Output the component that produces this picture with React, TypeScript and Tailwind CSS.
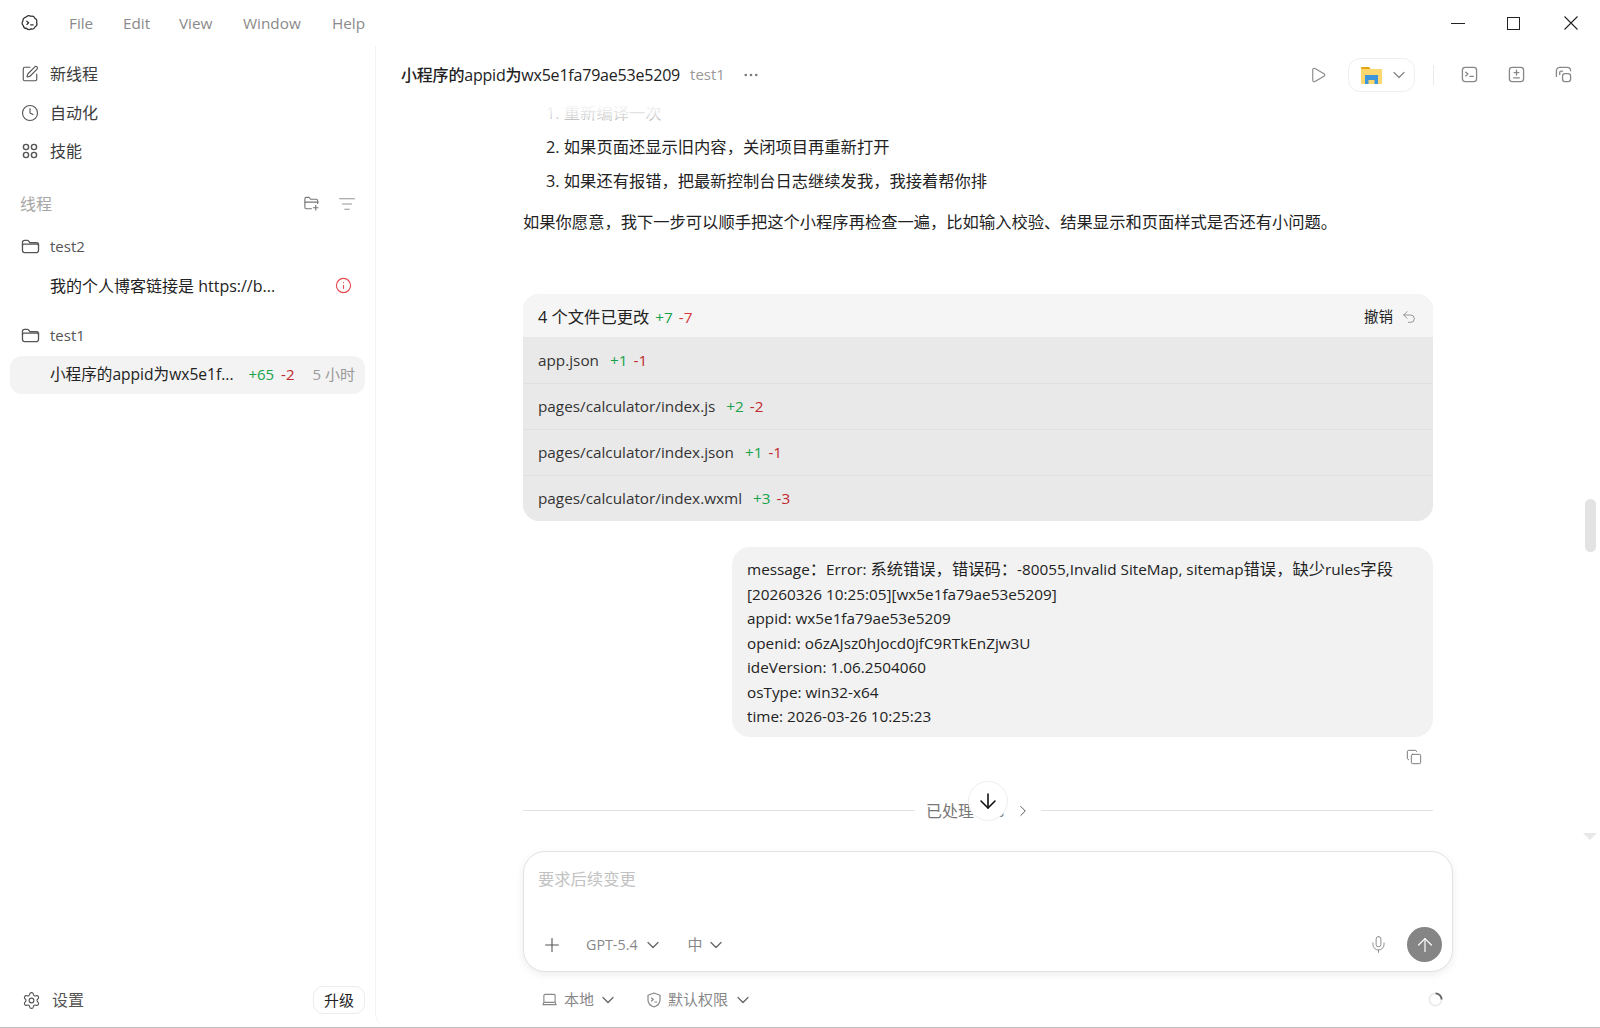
import {
  ArrowDown,
  ArrowUp,
  ChevronDown,
  ChevronRight,
  Clock,
  Copy,
  Ellipsis,
  Info,
  ListFilter,
  Mic,
  Play,
  Plus,
  Settings,
  SquarePen,
  Undo2,
} from "lucide-react";

const FONT = "font-['Open_Sans','Noto_Sans_CJK_SC',sans-serif]";

const menus = [
  { label: "File", w: "w-[54px]" },
  { label: "Edit", w: "w-[56px]" },
  { label: "View", w: "w-[64px]" },
  { label: "Window", w: "w-[89px]" },
  { label: "Help", w: "w-[40px]" },
];

const files = [
  { name: "app.json", add: "+1", del: "-1" },
  { name: "pages/calculator/index.js", add: "+2", del: "-2" },
  { name: "pages/calculator/index.json", add: "+1", del: "-1" },
  { name: "pages/calculator/index.wxml", add: "+3", del: "-3" },
];

const errorLines = [
  "[20260326 10:25:05][wx5e1fa79ae53e5209]",
  "appid: wx5e1fa79ae53e5209",
  "openid: o6zAJsz0hJocd0jfC9RTkEnZjw3U",
  "ideVersion: 1.06.2504060",
  "osType: win32-x64",
  "time: 2026-03-26 10:25:23",
];

function Logo() {
  return (
    <svg viewBox="0 0 20 20" className="h-[18px] w-[18px]" fill="none" stroke="#333" strokeWidth="1.4" strokeLinecap="round" strokeLinejoin="round">
      <path d="M6 3.2c1.6-1.6 3.4-1.7 4.8-.6 2-.7 4 .2 4.6 2.2 1.9.8 2.7 2.8 1.9 4.6.9 1.9.2 3.8-1.6 4.7-.5 2-2.5 3.100-4.500 2.400-1.500 1.200-3.500 1-4.800-.4-2 .1-3.600-1.200-3.800-3.200C1 11.600.8 9.500 2.100 8 1.900 5.800 3.700 3.900 6 3.200Z" />
      <path d="m6.500 8 2 1.800-2 1.800M10.800 12h2.700" />
    </svg>
  );
}

function SkillsIcon() {
  return (
    <svg viewBox="0 0 18 18" className="h-[18px] w-[18px]" fill="none" stroke="#555" strokeWidth="1.4">
      <circle cx="5" cy="5" r="2.600" />
      <circle cx="13" cy="5" r="2.600" />
      <circle cx="5" cy="13" r="2.600" />
      <circle cx="13" cy="13" r="2.600" />
    </svg>
  );
}

function ProjectFolderIcon() {
  return (
    <svg viewBox="0 0 20 18" className="h-[17px] w-[19px]" fill="none" stroke="#555" strokeWidth="1.400" strokeLinecap="round" strokeLinejoin="round">
      <path d="M4 15.500h12a2.500 2.500 0 0 0 2.500-2.500V7a2 2 0 0 0-2-2H9.500L7.600 2.800a1 1 0 0 0-.8-.3H3.500a2 2 0 0 0-2 2V13A2.500 2.500 0 0 0 4 15.500Z" />
      <path d="M1.500 8a1.500 1.500 0 0 1 1.500-1.500h14a1.500 1.500 0 0 1 1.500 1.500" />
    </svg>
  );
}

function FolderPlusIcon() {
  return (
    <svg viewBox="0 0 18 18" className="h-[17px] w-[17px]" fill="none" stroke="#777" strokeWidth="1.200" strokeLinecap="round" strokeLinejoin="round">
      <path d="M9 14.500H3.500A1.500 1.500 0 0 1 2 13V4a1.500 1.500 0 0 1 1.500-1.500h2.800l1.700 2h6a1.500 1.500 0 0 1 1.500 1.500v3" />
      <path d="M2 7.500h14M13.500 11v5M11 13.500h5" />
    </svg>
  );
}

function ExplorerIcon() {
  return (
    <svg viewBox="0 0 22 18" className="h-[18px] w-[22px]">
      <path d="M0 2a1 1 0 0 1 1-1h7l2 2.500H0Z" fill="#e2a711" />
      <rect x="0" y="3" width="21" height="15" rx="1" fill="#fcd770" />
      <path d="M4 9h13v9h-3.500v-4h-6v4H4Z" fill="#3d96dc" />
    </svg>
  );
}

function TerminalIcon() {
  return (
    <svg viewBox="0 0 18 18" className="h-[17px] w-[17px]" fill="none" stroke="#888" strokeWidth="1.400" strokeLinecap="round" strokeLinejoin="round">
      <rect x="1.500" y="1.500" width="15" height="15" rx="3" />
      <path d="m5 6.500 2.300 2-2.300 2M9.500 11h3.500" />
    </svg>
  );
}

function DiffIcon() {
  return (
    <svg viewBox="0 0 18 18" className="h-[17px] w-[17px]" fill="none" stroke="#888" strokeWidth="1.400" strokeLinecap="round" strokeLinejoin="round">
      <rect x="1.500" y="1.500" width="15" height="15" rx="3" />
      <path d="M9 4.500v5M6.500 7h5M6 12.500h6" />
    </svg>
  );
}

function PanelIcon() {
  return (
    <svg viewBox="0 0 18 18" className="h-[17px] w-[17px]" fill="none" stroke="#888" strokeWidth="1.400" strokeLinecap="round" strokeLinejoin="round">
      <path d="M1.500 11V5a3.500 3.500 0 0 1 3.500-3.500h8A3.500 3.500 0 0 1 16.500 5" />
      <rect x="8" y="8" width="8.500" height="8.500" rx="2.500" />
      <path d="M5 9V7a1.500 1.500 0 0 1 1.500-1.500H8" />
    </svg>
  );
}

function LaptopIcon() {
  return (
    <svg viewBox="0 0 16 16" className="h-[15px] w-[15px]" fill="none" stroke="#888" strokeWidth="1.200" strokeLinecap="round" strokeLinejoin="round">
      <rect x="2" y="2.500" width="12" height="8.500" rx="1.200" />
      <path d="M1 13.500h14M2 11l-1 2.500M14 11l1 2.500" />
    </svg>
  );
}

function ShieldIcon() {
  return (
    <svg viewBox="0 0 16 16" className="h-[16px] w-[16px]" fill="none" stroke="#888" strokeWidth="1.200" strokeLinecap="round" strokeLinejoin="round">
      <path d="M8 1 14 3.200V8c0 3.500-2.500 5.800-6 7-3.500-1.200-6-3.500-6-7V3.200Z" />
      <path d="m5.500 6 1.800 1.500-1.800 1.500M8.800 10h2" />
    </svg>
  );
}

function Sidebar() {
  return (
    <aside className="flex w-[375px] shrink-0 flex-col">
      <nav className="flex flex-col pt-[9px] pl-[21px] text-[16px] text-[#3c3c3c]">
        <div className="flex h-[38.500px] items-center gap-[11px]">
          <SquarePen size={18} strokeWidth={1.500} color="#555" />
          <span>新线程</span>
        </div>
        <div className="flex h-[38.500px] items-center gap-[11px]">
          <Clock size={18} strokeWidth={1.500} color="#555" />
          <span>自动化</span>
        </div>
        <div className="flex h-[38.500px] items-center gap-[11px]">
          <SkillsIcon />
          <span>技能</span>
        </div>
      </nav>

      <div className="mt-[17px] flex h-[32px] items-center justify-between pl-[20px] pr-[19px]">
        <span className="text-[16px] text-[#a6a6a6]">线程</span>
        <div className="flex items-center gap-[18px]">
          <FolderPlusIcon />
          <ListFilter size={18} strokeWidth={1.200} color="#888" />
        </div>
      </div>

      <div className="mt-[8px] flex h-[38px] items-center gap-[10px] pl-[21px] text-[15px] text-[#555]">
        <ProjectFolderIcon />
        <span>test2</span>
      </div>
      <div className="mt-[1px] flex h-[38px] items-center justify-between pl-[50px] pr-[23px] text-[16px] text-[#222]">
        <span>我的个人博客链接是 https://b...</span>
        <Info size={17} strokeWidth={1.600} color="#e5484d" />
      </div>

      <div className="mt-[12px] flex h-[38px] items-center gap-[10px] pl-[21px] text-[15px] text-[#555]">
        <ProjectFolderIcon />
        <span>test1</span>
      </div>
      <div className="mx-[10px] mt-[1px] flex h-[38px] items-center rounded-[12px] bg-[#f3f3f3] pl-[40px] pr-[10px] text-[15px] text-[#222]">
        <span className="flex-1 text-[15.600px]">小程序的appid为wx5e1f...</span>
        <span className="text-[#16a34a]">+65</span>
        <span className="ml-[7px] text-[#c0282d]">-2</span>
        <span className="ml-[18px] text-[#999]">5 小时</span>
      </div>

      <div className="mt-auto flex h-[52px] items-center justify-between pb-[2px] pl-[22px] pr-[10px]">
        <div className="flex items-center gap-[11px] text-[16px] text-[#555]">
          <Settings size={19} strokeWidth={1.400} color="#555" />
          <span>设置</span>
        </div>
        <div className="flex h-[28px] w-[52px] items-center justify-center rounded-[10px] border border-[#ececec] text-[15px] text-[#222]">
          升级
        </div>
      </div>
    </aside>
  );
}

function FilesCard() {
  return (
    <div className="mt-[55px] overflow-hidden rounded-[16px] bg-[#e9e9e9] text-[15.300px] text-[#333]">
      <div className="flex h-[43px] items-center justify-between bg-[#f5f5f5] pl-[15px] pr-[16px] pt-[3px]">
        <div>
          <span className="text-[16.300px] text-[#222]">4 个文件已更改</span>
          <span className="ml-[6px] text-[#16a34a]">+7</span>
          <span className="ml-[6px] text-[#d63a3a]">-7</span>
        </div>
        <div className="flex items-center gap-[8px] text-[14.500px] text-[#222]">
          <span>撤销</span>
          <Undo2 size={16} strokeWidth={1.300} color="#888" />
        </div>
      </div>
      {files.map((f, i) => (
        <div key={f.name} className={`flex h-[46px] items-center pl-[15px] ${i > 0 ? "border-t border-[#e0e0e0]" : ""}`}>
          <span>{f.name}</span>
          <span className="ml-[11px] text-[#16a34a]">{f.add}</span>
          <span className="ml-[6px] text-[#c0282d]">{f.del}</span>
        </div>
      ))}
    </div>
  );
}

function Conversation() {
  return (
    <div className="relative min-h-0 flex-1 overflow-hidden">
      <div className="-mt-[7px] ml-[147px] w-[910px] text-[#222]">
        <ol className="pl-[23px] text-[16.300px]">
          <li className="flex h-[34px] items-center">1. 重新编译一次</li>
          <li className="flex h-[34px] items-center">2. 如果页面还显示旧内容，关闭项目再重新打开</li>
          <li className="flex h-[34px] items-center">3. 如果还有报错，把最新控制台日志继续发我，我接着帮你排</li>
        </ol>
        <p className="mt-[7px] text-[16.300px] leading-[34px]">
          如果你愿意，我下一步可以顺手把这个小程序再检查一遍，比如输入校验、结果显示和页面样式是否还有小问题。
        </p>

        <FilesCard />

        <div className="ml-auto mt-[26px] w-[701px] rounded-[18px] bg-[#f2f2f2] px-[15px] pb-[8px] pt-[10px] text-[15.300px] leading-[24.500px] text-[#222]">
          <div>
            message<span className="text-[16.300px]">：</span>Error: <span className="text-[16.300px]">系统错误，错误码：</span>-80055,Invalid SiteMap, sitemap<span className="text-[16.300px]">错误，缺少</span>rules<span className="text-[16.300px]">字段</span>
          </div>
          {errorLines.map((line) => (
            <div key={line}>{line}</div>
          ))}
        </div>
        <div className="mt-[12px] flex justify-end pr-[11px]">
          <Copy size={16} strokeWidth={1.300} color="#666" />
        </div>

        <div className="mt-[34px] flex items-center">
          <div className="h-px flex-1 bg-[#e2e2e2]" />
          <div className="flex w-[126px] items-center pl-[11px] text-[16px] text-[#777]">
            <span>已处理 32s</span>
            <ChevronRight size={18} strokeWidth={1.300} color="#555" className="ml-auto mr-[9px]" />
          </div>
          <div className="h-px w-[392px] bg-[#e2e2e2]" />
        </div>
      </div>

      <div className="absolute left-0 right-0 top-0 h-[30px] bg-gradient-to-b from-white via-white/80 to-transparent" />

      <div className="absolute left-[592px] top-[678px] flex h-[40px] w-[40px] items-center justify-center rounded-full border border-[#eeeeee] bg-white">
        <ArrowDown size={24} strokeWidth={1.600} color="#111" />
      </div>

      <div className="absolute right-[4px] top-[396px] h-[53px] w-[11px] rounded-full bg-[#e3e3e3]" />
      <div className="absolute bottom-[11px] right-[3px] h-0 w-0 border-x-[7px] border-t-[7px] border-x-transparent border-t-[#e8e8e8]" />
    </div>
  );
}

function Composer() {
  return (
    <div className="ml-[147px] w-[930px] shrink-0">
      <div className="flex h-[121px] flex-col rounded-[22px] border border-[#e2e2e2] bg-white shadow-[0_3px_8px_rgba(0,0,0,0.07)]">
        <div className="px-[14px] pt-[15px] text-[16.300px] text-[#c2c2c2]">要求后续变更</div>
        <div className="mt-auto flex items-center pb-[9px] pl-[17px] pr-[10px]">
          <Plus size={22} strokeWidth={1.200} color="#555" />
          <div className="ml-[23px] flex items-center gap-[5px] text-[14.300px] text-[#888]">
            <span>GPT-5.4</span>
            <ChevronDown size={20} strokeWidth={1.500} color="#666" />
          </div>
          <div className="ml-[25px] flex items-center gap-[3px] text-[15px] text-[#888]">
            <span>中</span>
            <ChevronDown size={20} strokeWidth={1.500} color="#666" />
          </div>
          <Mic size={19} strokeWidth={1.200} color="#888" className="ml-auto" />
          <div className="ml-[19px] flex h-[35px] w-[35px] items-center justify-center rounded-full bg-[#858585]">
            <ArrowUp size={22} strokeWidth={1.300} color="#fff" />
          </div>
        </div>
      </div>

      <div className="flex h-[55px] items-center pl-[19px] pr-[10px] text-[15px] text-[#888]">
        <LaptopIcon />
        <span className="ml-[7px]">本地</span>
        <ChevronDown size={20} strokeWidth={1.500} color="#666" className="ml-[4px]" />
        <div className="ml-[28px]">
          <ShieldIcon />
        </div>
        <span className="ml-[6px]">默认权限</span>
        <ChevronDown size={20} strokeWidth={1.500} color="#666" className="ml-[5px]" />
        <svg viewBox="0 0 16 16" className="ml-auto h-[15px] w-[15px]" fill="none" strokeWidth="2">
          <circle cx="8" cy="8" r="6.500" stroke="#ececec" />
          <path d="M8 1.500A6.500 6.500 0 0 1 14.500 8" stroke="#666" />
        </svg>
      </div>
    </div>
  );
}

export default function App() {
  return (
    <div className={`flex h-[1028px] w-[1600px] flex-col overflow-hidden border-b border-[#bdbdbd] bg-white ${FONT}`}>
      <header className="flex h-[46px] shrink-0 items-center">
        <div className="flex w-[69px] justify-center pr-[9px]">
          <Logo />
        </div>
        <div className="flex text-[15.300px] text-[#8a8a8a]">
          {menus.map((m) => (
            <span key={m.label} className={m.w}>
              {m.label}
            </span>
          ))}
        </div>
        <div className="ml-auto flex items-center pr-[22px]">
          <div className="h-px w-[14px] bg-[#222]" />
          <div className="ml-[42px] h-[13px] w-[13px] border border-[#222]" />
          <svg viewBox="0 0 14 14" className="ml-[44px] h-[14px] w-[14px]" stroke="#222" strokeWidth="1.100">
            <path d="M.5.500l13 13M13.500.500l-13 13" />
          </svg>
        </div>
      </header>

      <div className="flex min-h-0 flex-1">
        <Sidebar />
        <main className="flex min-w-0 flex-1 flex-col rounded-bl-[14px] border-l border-[#f3f3f3]">
          <div className="flex h-[57px] shrink-0 items-center pl-[25px] pr-[28px]">
            <span className="text-[16px] font-medium tracking-[-0.2px] text-[#222]">小程序的appid为wx5e1fa79ae53e5209</span>
            <span className="ml-[10px] text-[15px] font-medium text-[#999]">test1</span>
            <Ellipsis size={18} strokeWidth={1.500} color="#777" className="ml-[17px]" />
            <Play size={18} strokeWidth={1.500} color="#888" className="ml-auto" />
            <div className="ml-[21px] flex h-[34px] w-[67px] items-center gap-[6px] rounded-[12px] border border-[#eeeeee] pl-[12px]">
              <ExplorerIcon />
              <ChevronDown size={20} strokeWidth={1.500} color="#888" />
            </div>
            <div className="ml-[18px] h-[20px] w-px bg-[#eaeaea]" />
            <div className="ml-[27px]">
              <TerminalIcon />
            </div>
            <div className="ml-[30px]">
              <DiffIcon />
            </div>
            <div className="ml-[30px]">
              <PanelIcon />
            </div>
          </div>
          <Conversation />
          <Composer />
        </main>
      </div>
    </div>
  );
}
